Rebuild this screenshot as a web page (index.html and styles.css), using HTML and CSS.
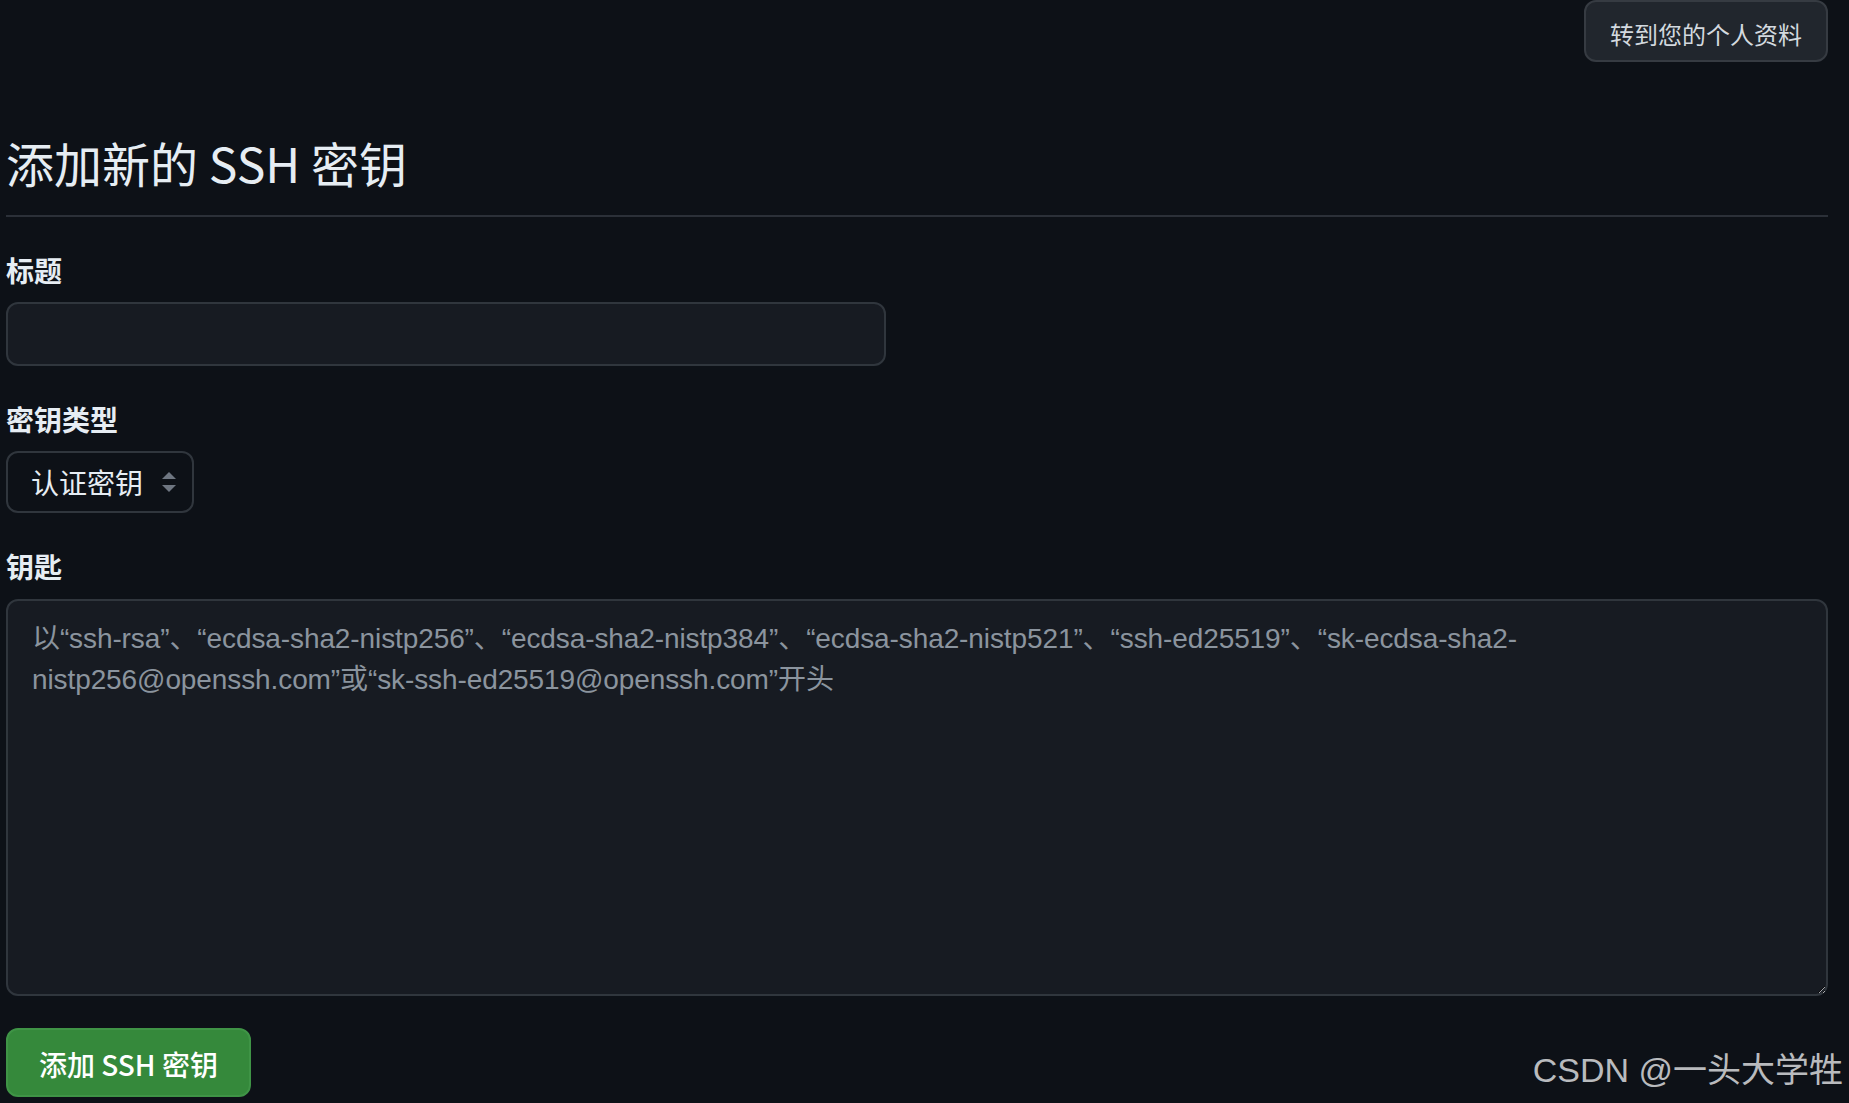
FILE: index.html
```html
<!DOCTYPE html>
<html lang="zh-CN">
<head>
<meta charset="utf-8">
<title>添加新的 SSH 密钥</title>
<link rel="stylesheet" href="styles.css">
</head>
<body>
<div class="page">
  <div class="topbar">
    <a class="btn-secondary" href="#">转到您的个人资料</a>
  </div>
  <div class="subhead">
    <h2 class="subhead-title">添加新的 SSH 密钥</h2>
  </div>
  <form class="ssh-form">
    <div class="field field-first">
      <label class="field-label">标题</label>
      <input class="text-input" type="text">
    </div>
    <div class="field">
      <label class="field-label">密钥类型</label>
      <div class="select">
        <span class="select-text">认证密钥</span>
        <svg class="select-arrows" width="16" height="20" viewBox="0 0 16 20"><path d="M8 0 L15 7 L1 7 Z" fill="#6e7681"/><path d="M1 13 L15 13 L8 20 Z" fill="#6e7681"/></svg>
      </div>
    </div>
    <div class="field field-key">
      <label class="field-label">钥匙</label>
      <textarea class="key-area" placeholder="以“ssh-rsa”、“ecdsa-sha2-nistp256”、“ecdsa-sha2-nistp384”、“ecdsa-sha2-nistp521”、“ssh-ed25519”、“sk-ecdsa-sha2-nistp256@openssh.com”或“sk-ssh-ed25519@openssh.com”开头"></textarea>
    </div>
    <button class="btn-primary" type="button">添加 SSH 密钥</button>
  </form>
</div>
<div class="watermark">CSDN @一头大学牲</div>
</body>
</html>
```
FILE: styles.css
```css
html, body {
  margin: 0;
  padding: 0;
  background: #0d1117;
  color-scheme: dark;
}
body {
  height: 1103px;
  overflow: hidden;
  position: relative;
  font-family: "Noto Sans CJK SC", "Noto Sans", sans-serif;
  color: #e6edf3;
}
.page {
  padding: 0 21px 0 6px;
}
.topbar {
  display: flex;
  justify-content: flex-end;
  height: 62px;
}
.btn-secondary {
  display: flex;
  align-items: center;
  box-sizing: border-box;
  height: 62px;
  padding: 5px 24px 0;
  background: #21262d;
  border: 2px solid #363b42;
  border-radius: 12px;
  color: #d3d9df;
  font-size: 24px;
  text-decoration: none;
}
.subhead {
  margin-top: 64px;
  border-bottom: 2px solid #2b3038;
  padding-bottom: 17px;
}
.subhead-title {
  margin: 0;
  font-size: 48px;
  line-height: 72px;
  font-weight: 400;
  color: #e6edf3;
}
.ssh-form {
  display: flex;
  flex-direction: column;
  align-items: flex-start;
}
.field {
  margin-top: 33px;
  width: 100%;
}
.field-first {
  margin-top: 33px;
}
.field-label {
  display: block;
  font-size: 28px;
  line-height: 40px;
  font-weight: 700;
  margin-bottom: 12px;
}
.field-key .field-label {
  margin-bottom: 13px;
}
.text-input {
  display: block;
  box-sizing: border-box;
  width: 880px;
  height: 64px;
  margin: 0;
  background: #171b22;
  border: 2px solid #30363d;
  border-radius: 12px;
  outline: none;
}
.select {
  display: inline-flex;
  align-items: center;
  box-sizing: border-box;
  width: 188px;
  height: 62px;
  padding: 0 15px 0 23px;
  border: 2px solid #30363d;
  border-radius: 12px;
  background: #0d1117;
  justify-content: space-between;
}
.select-text {
  font-size: 28px;
  line-height: 40px;
  color: #e6edf3;
}
.select-arrows {
  display: block;
}
.key-area {
  display: block;
  box-sizing: border-box;
  width: 100%;
  height: 397px;
  margin: 0;
  padding: 17px 200px 16px 24px;
  background: #171b22;
  border: 2px solid #30363d;
  border-radius: 12px;
  font-family: "Liberation Sans", "Noto Sans CJK SC", sans-serif;
  font-size: 28px;
  line-height: 41px;
  letter-spacing: -0.1px;
  color: #e6edf3;
  outline: none;
}
.key-area::placeholder {
  color: #8b949e;
}
.btn-primary {
  margin-top: 32px;
  box-sizing: border-box;
  height: 69px;
  padding: 3px 31px 0;
  background: #35893b;
  border: 2px solid #3f9446;
  border-radius: 12px;
  color: #ffffff;
  font-family: "Noto Sans CJK SC", "Noto Sans", sans-serif;
  font-size: 28px;
  font-weight: 500;
}
.watermark {
  position: absolute;
  right: 6px;
  top: 1053px;
  font-family: "Liberation Sans", "Noto Sans CJK SC", sans-serif;
  font-size: 34px;
  line-height: 34px;
  color: #b9bbbe;
  white-space: nowrap;
}
```
